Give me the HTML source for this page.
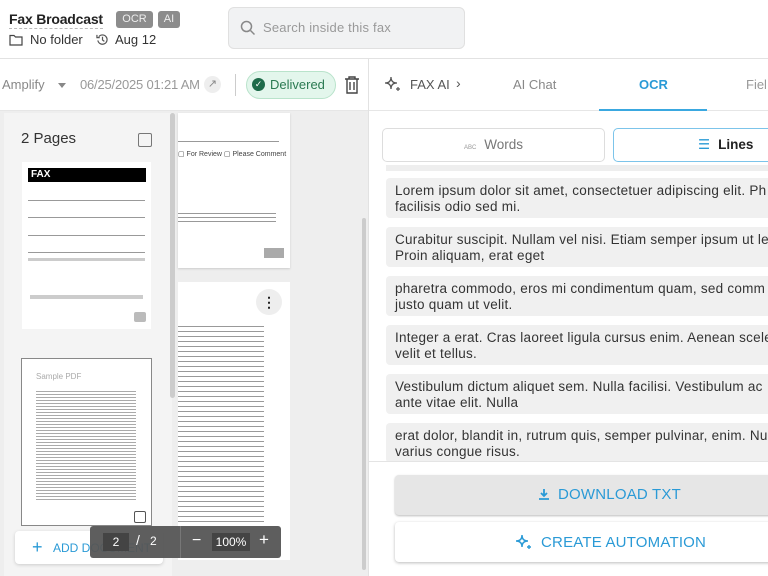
<!DOCTYPE html>
<html><head><meta charset="utf-8"><style>
*{box-sizing:border-box;margin:0;padding:0}
body{width:768px;height:576px;overflow:hidden;background:#fff;font-family:"Liberation Sans",sans-serif;position:relative;color:#222}
.a{position:absolute}
.tag{position:absolute;top:11px;height:17px;background:#8c8c8c;color:#eee;font-size:11px;border-radius:3px;line-height:17px;text-align:center}
.card{position:absolute;left:386px;width:400px;height:40px;background:#f0f0f0;border-radius:4px;font-size:13.5px;letter-spacing:0.25px;color:#333;padding:5px 0 0 9px;line-height:16px;white-space:nowrap}
.ln{position:absolute;height:2px;background:#999}
</style></head><body>
<!-- header -->
<div class="a" style="left:9px;top:10px;font-size:14px;font-weight:bold;color:#222;border-bottom:1px dashed #bbb;line-height:18px;letter-spacing:-0.2px">Fax Broadcast</div>
<div class="tag" style="left:116px;width:37px">OCR</div>
<div class="tag" style="left:158px;width:22px">AI</div>
<svg class="a" style="left:9px;top:34px" width="14" height="12" viewBox="0 0 14 12"><path d="M1 1.5h4l1.5 1.5H13v8H1z" fill="none" stroke="#444" stroke-width="1.2"/></svg>
<div class="a" style="left:30px;top:32px;font-size:13px;color:#333">No folder</div>
<svg class="a" style="left:96px;top:33px" width="13" height="13" viewBox="0 0 14 14"><path d="M3 4A5 5 0 1 1 2 8" fill="none" stroke="#555" stroke-width="1.3"/><path d="M1 2v3h3" fill="none" stroke="#555" stroke-width="1.3"/><path d="M7 4v3.5l2 1.5" fill="none" stroke="#555" stroke-width="1.3"/></svg>
<div class="a" style="left:115px;top:32px;font-size:13px;color:#333">Aug 12</div>
<div class="a" style="left:228px;top:7px;width:237px;height:42px;background:#f1f2f3;border:1px solid #e0e0e0;border-radius:6px"></div>
<svg class="a" style="left:240px;top:20px" width="16" height="16" viewBox="0 0 16 16"><circle cx="6.5" cy="6.5" r="5" fill="none" stroke="#888" stroke-width="1.5"/><path d="M10.5 10.5l4 4" stroke="#888" stroke-width="1.5"/></svg>
<div class="a" style="left:263px;top:20px;font-size:13px;color:#999;letter-spacing:0.2px">Search inside this fax</div>
<div class="a" style="left:0;top:58px;width:768px;height:1px;background:#e2e2e2"></div>
<div class="a" style="left:368px;top:58px;width:1px;height:518px;background:#e2e2e2"></div>
<!-- toolbar -->
<div class="a" style="left:2px;top:77px;font-size:13px;color:#888">Amplify</div>
<div class="a" style="left:58px;top:83px;border:4px solid transparent;border-top:5px solid #888"></div>
<div class="a" style="left:80px;top:77px;font-size:13px;color:#999;letter-spacing:-0.2px">06/25/2025 01:21 AM</div>
<div class="a" style="left:204px;top:76px;width:17px;height:17px;border-radius:50%;background:#eee;color:#888;font-size:11px;text-align:center;line-height:17px">↗</div>
<div class="a" style="left:235px;top:74px;width:1px;height:22px;background:#ccc"></div>
<div class="a" style="left:246px;top:71px;width:90px;height:28px;border-radius:14px;background:#e3f6ec;border:1px solid #b9e3cb"></div>
<div class="a" style="left:252px;top:78px;width:13px;height:13px;border-radius:50%;background:#1e6b4a;color:#fff;font-size:9px;text-align:center;line-height:13px">✓</div>
<div class="a" style="left:270px;top:77px;font-size:13px;color:#2b7a52">Delivered</div>
<svg class="a" style="left:344px;top:76px" width="16" height="18" viewBox="0 0 16 18"><path d="M1 3h14M5 3V1h6v2M3 3v14h10V3M6 6v8M10 6v8" fill="none" stroke="#444" stroke-width="1.4"/></svg>
<div class="a" style="left:0;top:110px;width:368px;height:1px;background:#e6e6e6"></div>
<!-- left content -->
<div class="a" style="left:0;top:111px;width:368px;height:465px;background:#eeeeee"></div>
<div class="a" style="left:4px;top:113px;width:168px;height:463px;background:#f4f4f4"></div>
<div class="a" style="left:21px;top:130px;font-size:15px;color:#333">2 Pages</div>
<div class="a" style="left:138px;top:133px;width:14px;height:14px;border:1.5px solid #777;border-radius:2px"></div>
<div class="a" style="left:22px;top:162px;width:129px;height:167px;background:#fff"></div>
<div class="a" style="left:28px;top:168px;width:118px;height:14px;background:#000;color:#fff;font-size:10px;font-weight:bold;padding:1px 3px">FAX</div>
<div class="ln" style="left:28px;top:200px;width:117px;height:1px"></div>
<div class="ln" style="left:28px;top:217px;width:117px;height:1px"></div>
<div class="ln" style="left:28px;top:235px;width:117px;height:1px"></div>
<div class="ln" style="left:28px;top:252px;width:117px;height:1px"></div>
<div class="ln" style="left:28px;top:258px;width:117px;height:3px;background:#ccc"></div>
<div class="ln" style="left:30px;top:295px;width:113px;height:4px;background:#ccc"></div>
<div class="a" style="left:134px;top:312px;width:12px;height:10px;background:#bbb;border-radius:2px"></div>
<div class="a" style="left:21px;top:358px;width:131px;height:168px;background:#fff;border:1px solid #888"></div>
<div class="a" style="left:36px;top:372px;font-size:8px;color:#aaa">Sample PDF</div>
<div class="a" style="left:36px;top:390px;width:100px;height:110px;background:repeating-linear-gradient(#fff 0,#fff 1px,#aaa 1px,#aaa 2px,#fff 2px,#fff 3px)"></div>
<div class="a" style="left:134px;top:511px;width:12px;height:12px;border:1px solid #555;border-radius:2px"></div>
<div class="a" style="left:170px;top:113px;width:5px;height:285px;background:#ccc;border-radius:3px"></div>
<div class="a" style="left:178px;top:113px;width:112px;height:155px;background:#fff;box-shadow:0 1px 2px #ccc"></div>
<div class="ln" style="left:178px;top:141px;width:101px;height:1px"></div>
<div class="a" style="left:178px;top:150px;font-size:7px;color:#444">▢ For Review ▢ Please Comment</div>
<div class="a" style="left:178px;top:212px;width:98px;height:12px;background:repeating-linear-gradient(#fff 0,#fff 1px,#999 1px,#999 2px,#fff 2px,#fff 4px)"></div>
<div class="a" style="left:264px;top:248px;width:20px;height:10px;background:#aaa"></div>
<div class="a" style="left:178px;top:282px;width:112px;height:278px;background:#fff"></div>
<div class="a" style="left:256px;top:289px;width:26px;height:26px;border-radius:50%;background:#eee;text-align:center;font-size:14px;font-weight:bold;line-height:26px">⋮</div>
<div class="a" style="left:178px;top:324px;width:86px;height:200px;background:repeating-linear-gradient(#fff 0,#fff 2px,#999 2px,#999 3px,#fff 3px,#fff 5px)"></div>
<div class="a" style="left:362px;top:218px;width:4px;height:352px;background:#ccc;border-radius:2px"></div>
<div class="a" style="left:15px;top:531px;width:148px;height:33px;background:#fff;border-radius:4px;box-shadow:0 1px 3px #ccc"></div>
<div class="a" style="left:32px;top:537px;font-size:18px;color:#2a9ad6">+</div>
<div class="a" style="left:53px;top:541px;font-size:12px;color:#2a9ad6">ADD DOCUMENT</div>
<div class="a" style="left:90px;top:526px;width:191px;height:32px;background:#555;border-radius:3px;opacity:.95"></div>
<div class="a" style="left:103px;top:533px;width:26px;height:18px;background:#444;color:#fff;font-size:12px;text-align:center;line-height:18px">2</div>
<div class="a" style="left:136px;top:532px;color:#fff;font-size:14px">/</div>
<div class="a" style="left:150px;top:534px;color:#fff;font-size:12px">2</div>
<div class="a" style="left:180px;top:526px;width:1px;height:32px;background:#777"></div>
<div class="a" style="left:192px;top:532px;color:#fff;font-size:16px">−</div>
<div class="a" style="left:212px;top:533px;width:38px;height:18px;background:#444;color:#fff;font-size:12px;text-align:center;line-height:18px">100%</div>
<div class="a" style="left:259px;top:530px;color:#fff;font-size:17px">+</div>
<!-- right tabs -->
<svg class="a" style="left:384px;top:76px" width="18" height="16" viewBox="0 0 18 16"><path d="M7 1Q7 7 1 7Q7 7 7 13Q7 7 13 7Q7 7 7 1z" fill="none" stroke="#555" stroke-width="1.3"/><path d="M14 11v4M12 13h4" stroke="#555" stroke-width="1.2"/></svg>
<div class="a" style="left:410px;top:77px;font-size:13px;color:#555">FAX AI</div>
<div class="a" style="left:456px;top:75px;font-size:14px;color:#555">›</div>
<div class="a" style="left:513px;top:77px;font-size:13px;color:#888">AI Chat</div>
<div class="a" style="left:639px;top:77px;font-size:13px;color:#2a9ad6;font-weight:bold">OCR</div>
<div class="a" style="left:746px;top:77px;font-size:13px;color:#999">Fiel</div>
<div class="a" style="left:369px;top:110px;width:399px;height:1px;background:#e6e6e6"></div>
<div class="a" style="left:599px;top:109px;width:108px;height:2px;background:#3aa8e0"></div>
<div class="a" style="left:382px;top:128px;width:223px;height:34px;border:1px solid #ddd;border-radius:5px;text-align:center;line-height:32px;font-size:13.5px;color:#777"><span style="font-size:6px;color:#999;margin-right:8px">ABC</span>Words</div>
<div class="a" style="left:613px;top:128px;width:170px;height:34px;border:1px solid #7cc4ea;border-radius:5px;line-height:32px;font-size:13.5px;color:#222;padding-left:84px"><span style="color:#2a9ad6;margin-right:8px">☰</span><b style="font-weight:600">Lines</b></div>
<div class="a" style="left:386px;top:165px;width:382px;height:6px;background:#eee"></div>
<div class="card" style="top:178px">Lorem ipsum dolor sit amet, consectetuer adipiscing elit. Ph<br>facilisis odio sed mi.</div>
<div class="card" style="top:227px">Curabitur suscipit. Nullam vel nisi. Etiam semper ipsum ut le<br>Proin aliquam, erat eget</div>
<div class="card" style="top:276px">pharetra commodo, eros mi condimentum quam, sed comm<br>justo quam ut velit.</div>
<div class="card" style="top:325px">Integer a erat. Cras laoreet ligula cursus enim. Aenean sceler<br>velit et tellus.</div>
<div class="card" style="top:374px">Vestibulum dictum aliquet sem. Nulla facilisi. Vestibulum ac<br>ante vitae elit. Nulla</div>
<div class="card" style="top:423px">erat dolor, blandit in, rutrum quis, semper pulvinar, enim. Nu<br>varius congue risus.</div>
<div class="a" style="left:369px;top:461px;width:399px;height:115px;background:#fff;border-top:1px solid #e4e4e4"></div>
<div class="a" style="left:395px;top:475px;width:390px;height:40px;background:#e6e6e6;border-radius:4px;box-shadow:0 1px 2px #bbb"></div>
<svg class="a" style="left:538px;top:488px" width="12" height="13" viewBox="0 0 12 13"><path d="M6 1v7M3 5l3 3 3-3M1 11h10" fill="none" stroke="#2a9ad6" stroke-width="1.8"/></svg>
<div class="a" style="left:558px;top:486px;font-size:15px;color:#2a9ad6;letter-spacing:0.2px">DOWNLOAD TXT</div>
<div class="a" style="left:395px;top:522px;width:390px;height:40px;background:#fff;border-radius:4px;box-shadow:0 1px 3px #bbb"></div>
<svg class="a" style="left:515px;top:534px" width="18" height="16" viewBox="0 0 18 16"><path d="M7 1Q7 7 1 7Q7 7 7 13Q7 7 13 7Q7 7 7 1z" fill="none" stroke="#2a9ad6" stroke-width="1.5"/><path d="M14 11v4M12 13h4" stroke="#2a9ad6" stroke-width="1.4"/></svg>
<div class="a" style="left:541px;top:534px;font-size:15px;color:#2a9ad6;letter-spacing:0.2px">CREATE AUTOMATION</div>
</body></html>
